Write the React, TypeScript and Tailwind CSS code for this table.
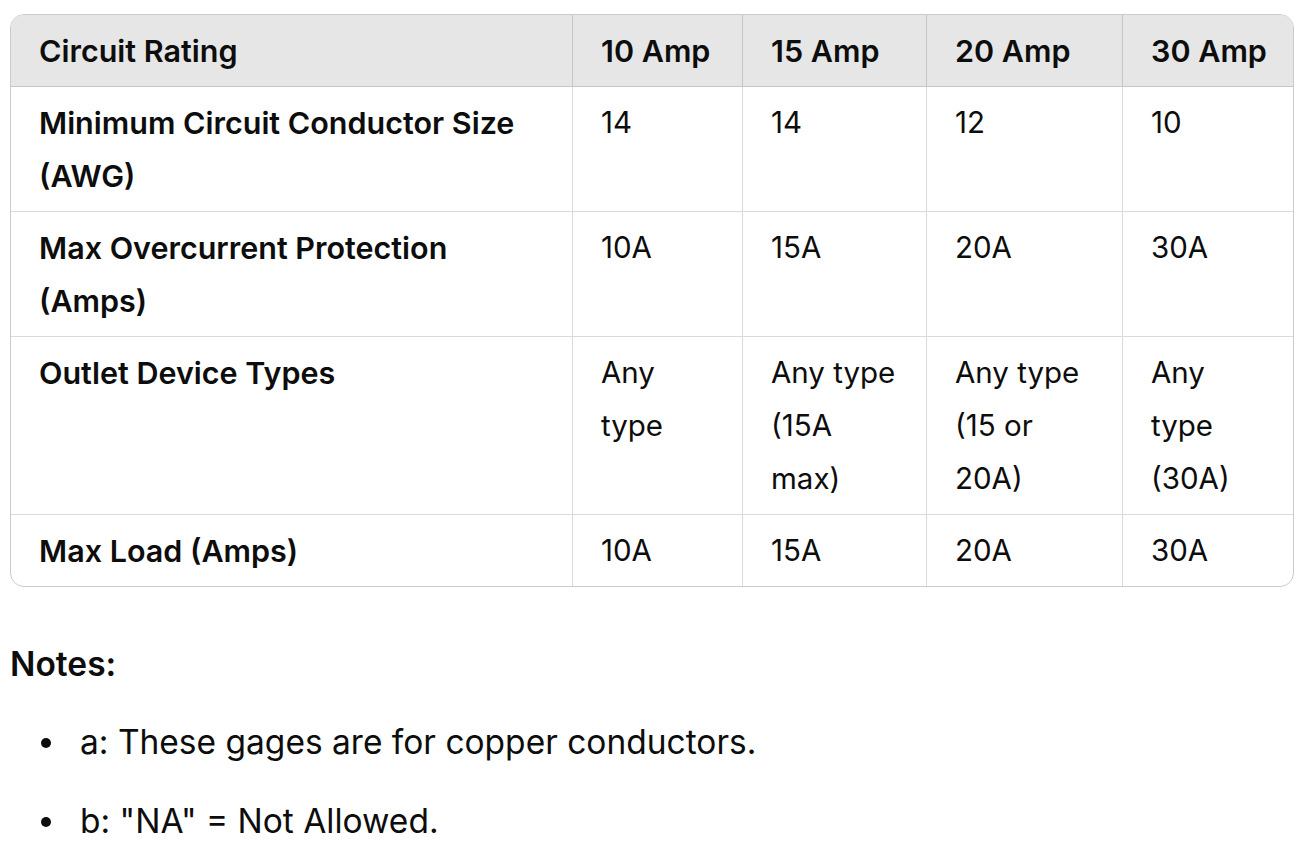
import React from 'react';

const columns = ['Circuit Rating', '10 Amp', '15 Amp', '20 Amp', '30 Amp'];
const widths = ['w-[561px]', 'w-[170px]', 'w-[184px]', 'w-[196px]', 'w-[172px]'];

const rows: { label: string[]; cells: string[][] }[] = [
  { label: ['Minimum Circuit Conductor Size', '(AWG)'], cells: [['14'], ['14'], ['12'], ['10']] },
  { label: ['Max Overcurrent Protection', '(Amps)'], cells: [['10A'], ['15A'], ['20A'], ['30A']] },
  {
    label: ['Outlet Device Types'],
    cells: [
      ['Any', 'type'],
      ['Any type', '(15A', 'max)'],
      ['Any type', '(15 or', '20A)'],
      ['Any', 'type', '(30A)'],
    ],
  },
  { label: ['Max Load (Amps)'], cells: [['10A'], ['15A'], ['20A'], ['30A']] },
];

const Lines = ({ lines }: { lines: string[] }) => (
  <>
    {lines.map((l, i) => (
      <div key={i} className="whitespace-nowrap">
        {l}
      </div>
    ))}
  </>
);

export default function App() {
  return (
    <div
      className="min-h-screen bg-white text-[#0d0d0d] pl-[10px] pt-[14px]"
      style={{ fontFamily: 'Inter, "Noto Sans", sans-serif' }}
    >
      <div className="w-[1284px] rounded-[14px] border-[1.5px] border-[#cbcbcb] overflow-hidden">
        <table className="w-full table-fixed border-separate border-spacing-0 text-[29.5px] leading-[53px]">
          <colgroup>
            {widths.map((w, i) => (
              <col key={i} className={w} />
            ))}
          </colgroup>
          <thead>
            <tr className="bg-[#e6e6e6]">
              {columns.map((c, i) => (
                <th
                  key={c}
                  className={`text-left whitespace-nowrap font-semibold text-[30.5px] px-[28px] py-[9px] border-b-[1.5px] border-[#c6c6c6] ${
                    i > 0 ? 'border-l-[1.5px]' : ''
                  }`}
                >
                  {c}
                </th>
              ))}
            </tr>
          </thead>
          <tbody>
            {rows.map((r, ri) => (
              <tr key={ri}>
                <td
                  className={`align-top font-semibold text-[30.5px] px-[28px] py-[9px] ${
                    ri < rows.length - 1 ? 'border-b-[1.5px] border-[#dadada]' : ''
                  }`}
                >
                  <Lines lines={r.label} />
                </td>
                {r.cells.map((c, ci) => (
                  <td
                    key={ci}
                    className={`align-top px-[28px] py-[9px] border-l-[1.5px] border-[#dadada] ${
                      ri < rows.length - 1 ? 'border-b-[1.5px]' : ''
                    }`}
                  >
                    <Lines lines={c} />
                  </td>
                ))}
              </tr>
            ))}
          </tbody>
        </table>
      </div>

      <p className="mt-[51px] text-[33.5px] leading-[53px] font-semibold">Notes:</p>
      <ul className="mt-[25px] flex flex-col gap-[26px] text-[33.5px] leading-[53px]">
        {['a: These gages are for copper conductors.', 'b: "NA" = Not Allowed.'].map((n) => (
          <li key={n} className="flex items-center">
            <span className="w-[70px] flex justify-center pl-[1px]">
              <span className="block w-[10px] h-[10px] rounded-full bg-[#0d0d0d]" />
            </span>
            <span>{n}</span>
          </li>
        ))}
      </ul>
    </div>
  );
}
